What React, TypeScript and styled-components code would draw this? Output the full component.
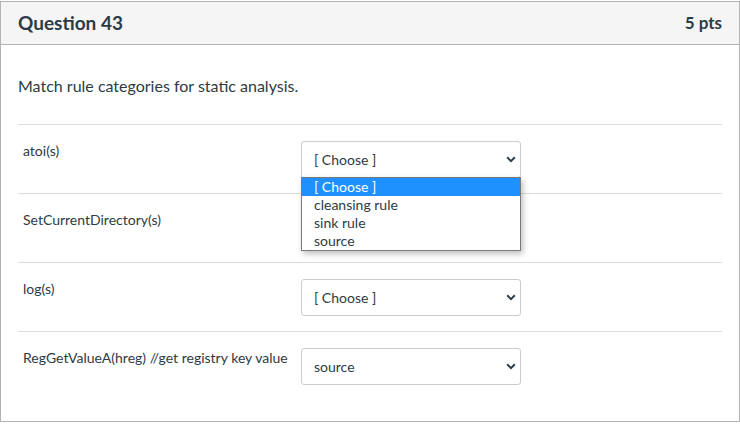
import styled, { createGlobalStyle } from "styled-components";

const GlobalStyle = createGlobalStyle`
  html, body {
    margin: 0;
    padding: 0;
    background: #ffffff;
  }
  body {
    font-family: Lato, "Liberation Sans", sans-serif;
    color: #2d3b45;
  }
`;

const Card = styled.div`
  margin-top: 1px;
  width: 740px;
  box-sizing: border-box;
  border: 1px solid #b3b3b3;
  background: #ffffff;
`;

const Header = styled.div`
  display: flex;
  justify-content: space-between;
  align-items: center;
  height: 43px;
  box-sizing: border-box;
  padding: 0 17px 1px 17px;
  background: #f5f5f5;
  border-bottom: 1px solid #b3b3b3;
`;

const Title = styled.h2`
  margin: 0;
  font-size: 19px;
  font-weight: 700;
  color: #2d3b45;
`;

const Points = styled.span`
  font-size: 17px;
  font-weight: 700;
  color: #2d3b45;
`;

const Body = styled.div`
  padding: 29px 17px 21px 17px;
`;

const Prompt = styled.p`
  margin: 0 0 26px;
  font-size: 16px;
  line-height: 24px;
`;

const Row = styled.div`
  display: flex;
  align-items: flex-start;
  border-top: 1px solid #dddddd;
  padding: 16px 0 15px 5px;
`;

const Label = styled.div`
  width: 278px;
  font-size: 14px;
  line-height: 20px;
  color: #2d3b45;
`;

const SelectWrap = styled.div`
  position: relative;
  width: 220px;
`;

const SelectBox = styled.select`
  appearance: none;
  -webkit-appearance: none;
  width: 220px;
  height: 37px;
  box-sizing: border-box;
  border: 1px solid #c7cdd1;
  border-radius: 3px;
  background: #ffffff;
  padding: 0 28px 0 12px;
  font-family: Lato, "Liberation Sans", sans-serif;
  font-size: 14px;
  color: #2d3b45;
  outline: none;
`;

const Chevron = styled.svg`
  position: absolute;
  right: 5px;
  top: 15px;
  width: 10px;
  height: 7px;
  pointer-events: none;
`;

const Options = styled.ul`
  position: absolute;
  left: 0;
  top: 36px;
  width: 220px;
  box-sizing: border-box;
  margin: 0;
  padding: 0;
  list-style: none;
  background: #ffffff;
  border: 1px solid #7a7a7a;
  box-shadow: 2px 3px 6px rgba(0, 0, 0, 0.25);
  z-index: 2;
`;

const Option = styled.li<{ $active?: boolean }>`
  height: 18px;
  line-height: 18px;
  padding-left: 12px;
  font-size: 14px;
  background: ${(p) => (p.$active ? "#1e90ff" : "transparent")};
  color: ${(p) => (p.$active ? "#ffffff" : "#2d3b45")};
`;

const choices = ["[ Choose ]", "cleansing rule", "sink rule", "source"];

const rows = [
  { label: "atoi(s)", value: "[ Choose ]", open: true },
  { label: "SetCurrentDirectory(s)", value: "[ Choose ]", open: false },
  { label: "log(s)", value: "[ Choose ]", open: false },
  { label: "RegGetValueA(hreg) //get registry key value", value: "source", open: false },
];

function Dropdown({ value, open }: { value: string; open: boolean }) {
  return (
    <SelectWrap>
      <SelectBox value={value} onChange={() => {}}>
        {choices.map((c) => (
          <option key={c} value={c}>
            {c}
          </option>
        ))}
      </SelectBox>
      <Chevron viewBox="0 0 10 7">
        <path d="M1.2 1.3 L5 5.1 L8.8 1.3" fill="none" stroke="#2d3b45" strokeWidth="2" />
      </Chevron>
      {open && (
        <Options>
          {choices.map((c) => (
            <Option key={c} $active={c === value}>
              {c}
            </Option>
          ))}
        </Options>
      )}
    </SelectWrap>
  );
}

export default function App() {
  return (
    <>
      <GlobalStyle />
      <Card>
        <Header>
          <Title>Question 43</Title>
          <Points>5 pts</Points>
        </Header>
        <Body>
          <Prompt>Match rule categories for static analysis.</Prompt>
          {rows.map((r) => (
            <Row key={r.label}>
              <Label>{r.label}</Label>
              <Dropdown value={r.value} open={r.open} />
            </Row>
          ))}
        </Body>
      </Card>
    </>
  );
}
